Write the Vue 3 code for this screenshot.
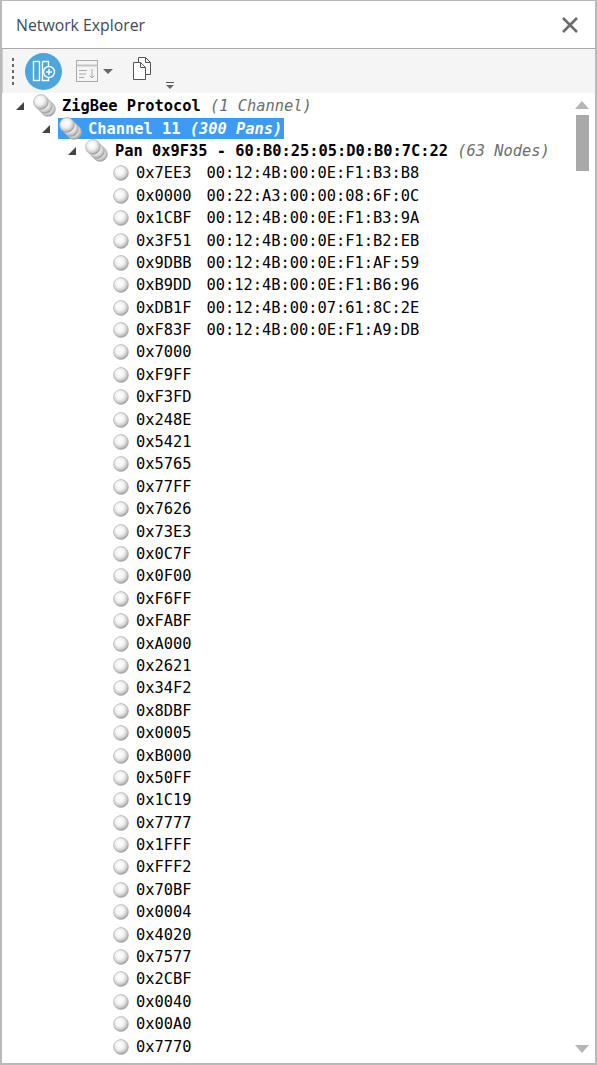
<template>
  <div class="panel">
    <div class="title-bar">
      <span class="title">Network Explorer</span>
      <svg class="close" width="18" height="18" viewBox="0 0 18 18">
        <path d="M2 2 L16 16 M16 2 L2 16" stroke="#6b6b6b" stroke-width="2.6" fill="none" />
      </svg>
    </div>

    <div class="toolbar">
      <div class="grip"><i v-for="n in 5" :key="n"></i></div>
      <div class="round-btn">
        <svg width="26" height="26" viewBox="0 0 26 26" fill="none" stroke="#fff" stroke-width="1.4">
          <rect x="2.5" y="3.5" width="6" height="19" />
          <path d="M11.5 3.5 H17.5 V8 M11.5 3.5 V22.5 H17.5 V20" />
          <circle cx="18" cy="14" r="5.5" />
          <path d="M18 11 V17 M15 14 H21" />
        </svg>
      </div>
      <svg class="sort-icon" width="24" height="24" viewBox="0 0 24 24" fill="none" stroke="#a9a9a9" stroke-width="1">
        <rect x="1.5" y="1.5" width="21" height="21" />
        <path d="M1.5 6.5 H22.5" stroke-width="2" stroke="#c4c4c4" />
        <path d="M4 11.5 H12 M4 15 H11 M4 18.5 H9 M17 10 V19 M14.5 16.5 L17 19 L19.5 16.5" />
      </svg>
      <span class="drop"></span>
      <svg class="copy-icon" width="20" height="24" viewBox="0 0 20 24" fill="#fff" stroke="#555" stroke-width="1">
        <path d="M6.5 1.5 H13.5 L18.5 6.5 V18.5 H6.5 Z" />
        <path d="M1.5 6.5 H8.5 L13.5 11.5 V23.5 H1.5 Z" />
        <path d="M8.5 6.5 V11.5 H13.5 M13.5 1.5 V6.5 H18.5" fill="none" />
      </svg>
      <div class="overflow"><i></i><span class="drop small"></span></div>
    </div>

    <div class="body">
      <div class="tree">
        <div class="row lvl0">
          <span class="arrow"></span>
          <svg class="stack" width="28" height="24" viewBox="0 0 28 24">
            <use href="#ball" x="7" y="7" /><use href="#ball" x="4" y="4" /><use href="#ball" x="0" y="0" />
          </svg>
          <span class="name">ZigBee Protocol</span><em>(1 Channel)</em>
        </div>
        <div class="row lvl1">
          <span class="arrow"></span>
          <span class="selected">
            <svg class="stack" width="28" height="24" viewBox="0 0 28 24">
              <use href="#ball" x="7" y="7" /><use href="#ball" x="4" y="4" /><use href="#ball" x="0" y="0" />
            </svg>
            <span class="name">Channel 11</span><em>(300 Pans)</em>
          </span>
        </div>
        <div class="row lvl2">
          <span class="arrow"></span>
          <svg class="stack" width="28" height="24" viewBox="0 0 28 24">
            <use href="#ball" x="7" y="7" /><use href="#ball" x="4" y="4" /><use href="#ball" x="0" y="0" />
          </svg>
          <span class="name">Pan 0x9F35 - 60:B0:25:05:D0:B0:7C:22</span><em>(63 Nodes)</em>
        </div>
        <div v-for="n in nodes" :key="n[0]" class="row node">
          <svg class="ball" width="16" height="16" viewBox="0 0 16 16"><use href="#ball" /></svg>
          <span class="addr">{{ n[0] }}</span>
          <span v-if="n[1]" class="mac">{{ n[1] }}</span>
        </div>
      </div>

      <div class="scrollbar">
        <span class="up"></span>
        <span class="thumb"></span>
        <span class="down"></span>
      </div>
    </div>

    <svg class="defs" width="0" height="0">
      <defs>
        <radialGradient id="ballFill" cx="0.42" cy="0.38" r="0.62">
          <stop offset="0" stop-color="#ffffff" />
          <stop offset="0.45" stop-color="#f4f4f4" />
          <stop offset="0.8" stop-color="#c9c9c9" />
          <stop offset="1" stop-color="#989898" />
        </radialGradient>
        <symbol id="ball" width="16" height="16" viewBox="0 0 16 16" overflow="visible">
          <circle cx="8" cy="8" r="7.4" fill="url(#ballFill)" stroke="#b0b0b0" stroke-width="0.7" />
        </symbol>
      </defs>
    </svg>
  </div>
</template>

<script setup>
const macs = [
  ['0x7EE3', '00:12:4B:00:0E:F1:B3:B8'],
  ['0x0000', '00:22:A3:00:00:08:6F:0C'],
  ['0x1CBF', '00:12:4B:00:0E:F1:B3:9A'],
  ['0x3F51', '00:12:4B:00:0E:F1:B2:EB'],
  ['0x9DBB', '00:12:4B:00:0E:F1:AF:59'],
  ['0xB9DD', '00:12:4B:00:0E:F1:B6:96'],
  ['0xDB1F', '00:12:4B:00:07:61:8C:2E'],
  ['0xF83F', '00:12:4B:00:0E:F1:A9:DB'],
]

const rest = [
  '0x7000', '0xF9FF', '0xF3FD', '0x248E', '0x5421', '0x5765', '0x77FF', '0x7626',
  '0x73E3', '0x0C7F', '0x0F00', '0xF6FF', '0xFABF', '0xA000', '0x2621', '0x34F2',
  '0x8DBF', '0x0005', '0xB000', '0x50FF', '0x1C19', '0x7777', '0x1FFF', '0xFFF2',
  '0x70BF', '0x0004', '0x4020', '0x7577', '0x2CBF', '0x0040', '0x00A0', '0x7770',
]

const nodes = [...macs, ...rest.map((a) => [a])]
</script>

<style>
html, body {
  margin: 0;
  background: #fff;
}
</style>

<style scoped>
.panel {
  box-sizing: border-box;
  width: 597px;
  height: 1065px;
  border: 2px solid #b9b9b9;
  border-top-width: 1px;
  display: flex;
  flex-direction: column;
  background: #fff;
  overflow: hidden;
}

.title-bar {
  height: 48px;
  flex: none;
  display: flex;
  align-items: center;
  justify-content: space-between;
  padding: 0 16px 0 14px;
  border-bottom: 1px solid #a9a9a9;
  box-sizing: border-box;
}

.title {
  font: 15.8px "Open Sans", sans-serif;
  color: #3c4a5c;
}

.toolbar {
  height: 44px;
  flex: none;
  background: #f5f5f5;
  display: flex;
  align-items: center;
  padding-left: 9px;
  border-left: 1px solid #d0d0d0;
}

.grip {
  display: flex;
  flex-direction: column;
  gap: 3px;
  margin-right: 11px;
}

.grip i {
  width: 2px;
  height: 3px;
  background: #666;
}

.round-btn {
  width: 37px;
  height: 37px;
  border-radius: 50%;
  background: #4aa6dd;
  display: flex;
  align-items: center;
  justify-content: center;
  margin-right: 13px;
}

.sort-icon {
  margin-right: 4px;
}

.drop {
  width: 0;
  height: 0;
  border: 5px solid transparent;
  border-top: 5px solid #666;
  border-bottom: 0;
}

.copy-icon {
  margin: -6px 0 0 19px;
}

.overflow {
  display: flex;
  flex-direction: column;
  align-items: center;
  gap: 2px;
  margin: 28px 0 0 14px;
}

.overflow i {
  width: 8px;
  height: 1px;
  background: #555;
}

.drop.small {
  border-width: 4px;
  border-top-width: 4px;
  border-bottom: 0;
}

.body {
  flex: 1;
  min-height: 0;
  display: flex;
  position: relative;
}

.tree {
  flex: 1;
  min-width: 0;
  padding-top: 2px;
  overflow: hidden;
  font-family: "DejaVu Sans Mono", monospace;
  font-size: 15.36px;
  color: #000;
}

.row {
  height: 22.4px;
  display: flex;
  align-items: center;
  white-space: pre;
}

.lvl0 { padding-left: 14px; }
.lvl1 { padding-left: 40px; }
.lvl2 { padding-left: 66px; }
.node { padding-left: 111px; }

.lvl2 .stack {
  margin-right: 2px;
}

.arrow {
  width: 0;
  height: 0;
  border-style: solid;
  border-width: 0 0 8px 8px;
  border-color: transparent transparent #444 transparent;
  margin-right: 9px;
  flex: none;
}

.stack {
  flex: none;
  overflow: visible;
  margin-right: 1px;
}

.name {
  font-weight: bold;
}

em {
  margin-left: 9.25px;
  font-style: italic;
  color: #6d6d6d;
}

.selected {
  display: flex;
  align-items: center;
  height: 21px;
  background: #3d9bf5;
  color: #fff;
  padding-right: 2px;
  margin-left: -1px;
  padding-left: 1px;
}

.selected em {
  color: #fff;
  font-weight: bold;
}

.ball {
  flex: none;
  margin-right: 7px;
  overflow: visible;
}

.mac {
  margin-left: 15px;
}

.scrollbar {
  width: 14px;
  margin-right: 6px;
  flex: none;
  display: flex;
  flex-direction: column;
  align-items: center;
  padding-top: 8px;
}

.up,
.down {
  width: 0;
  height: 0;
  border-style: solid;
  border-color: transparent;
}

.up {
  border-width: 0 7px 8px;
  border-bottom-color: #b5b5b5;
}

.thumb {
  width: 13px;
  height: 56px;
  margin-top: 6px;
  background: #a9a9a9;
}

.down {
  margin-top: auto;
  margin-bottom: 10px;
  border-width: 8px 7px 0;
  border-top-color: #b5b5b5;
}

.defs {
  position: absolute;
}
</style>
